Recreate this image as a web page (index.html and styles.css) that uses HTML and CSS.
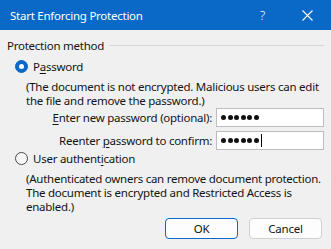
FILE: index.html
```html
<!DOCTYPE html>
<html>
<head>
<meta charset="utf-8">
<link rel="stylesheet" href="styles.css">
</head>
<body>
<div class="dialog">
  <div class="titlebar">
    <span class="title">Start Enforcing Protection</span>
    <span class="help">?</span>
    <svg class="close" width="11" height="11" viewBox="0 0 11 11"><path d="M0.5 0.5 L10.5 10.5 M10.5 0.5 L0.5 10.5" stroke="#fff" stroke-width="1.1" fill="none"/></svg>
  </div>
  <div class="body">
    <div class="group-header">
      <span class="group-label">Protection method</span>
      <span class="group-line"></span>
    </div>
    <div class="option option-first">
      <span class="radio radio-on"><span class="radio-dot"></span></span>
      <span class="option-label">P<u>a</u>ssword</span>
    </div>
    <div class="desc desc-first">(The document is not encrypted. Malicious users can edit<br>the file and remove the password.)</div>
    <div class="fields">
      <label class="field-label"><u>E</u>nter new password (optional):</label>
      <div class="box"><span class="dots"><i></i><i></i><i></i><i></i><i></i><i></i></span></div>
      <label class="field-label">Reenter <u>p</u>assword to confirm:</label>
      <div class="box"><span class="dots"><i></i><i></i><i></i><i></i><i></i><i></i></span><span class="caret"></span></div>
    </div>
    <div class="option option-second">
      <span class="radio"></span>
      <span class="option-label">User authent<u>i</u>cation</span>
    </div>
    <div class="desc desc-second">(Authenticated owners can remove document protection.<br>The document is encrypted and Restricted Access is<br>enabled.)</div>
    <div class="buttons">
      <button class="btn btn-default">OK</button>
      <button class="btn">Cancel</button>
    </div>
  </div>
</div>
</body>
</html>
```

FILE: styles.css
```css
html, body {
  margin: 0;
  padding: 0;
  background: #f0f0f0;
}
.dialog {
  width: 331px;
  height: 249px;
  background: #f0f0f0;
  font-family: "Noto Sans", "Liberation Sans", sans-serif;
  font-size: 11.5px;
  letter-spacing: -0.25px;
  color: #141414;
  overflow: hidden;
  display: flex;
  flex-direction: column;
}
.titlebar {
  height: 30px;
  background: #0a68c6;
  color: #fff;
  display: flex;
  align-items: center;
  padding-left: 10px;
  flex-shrink: 0;
}
.title {
  flex: 1;
  white-space: nowrap;
}
.help {
  font-size: 13px;
  margin-right: 37px;
  font-weight: 300;
}
.close {
  margin-right: 18px;
}
.body {
  padding: 8px 7px 0 7px;
  display: flex;
  flex-direction: column;
}
.group-header {
  display: flex;
  align-items: center;
  height: 15px;
  line-height: 15px;
}
.group-label {
  white-space: nowrap;
}
.group-line {
  flex: 1;
  height: 1px;
  background: #d6d6d6;
  margin-left: 5px;
  margin-top: -1px;
}
.option {
  display: flex;
  align-items: center;
  height: 15px;
  line-height: 15px;
  padding-left: 8px;
}
.option-first { margin-top: 6px; }
.option-second { margin-top: 1px; }
.radio {
  width: 11px;
  height: 11px;
  border: 1px solid #4a4a4a;
  border-radius: 50%;
  background: #f7f7f7;
  display: flex;
  align-items: center;
  justify-content: center;
  margin-right: 5px;
  flex-shrink: 0;
}
.radio-on {
  background: #0a68c6;
  border-color: #0a68c6;
}
.radio-dot {
  width: 5px;
  height: 5px;
  border-radius: 50%;
  background: #fff;
}
.desc {
  padding-left: 19px;
  line-height: 14px;
  white-space: nowrap;
}
.desc-first { margin-top: 6px; }
.desc-second { margin-top: 6px; }
.fields {
  display: grid;
  grid-template-columns: 1fr 108px;
  column-gap: 4px;
  row-gap: 4px;
  align-items: center;
}
.field-label {
  text-align: right;
  white-space: nowrap;
}
.box {
  height: 17px;
  background: #fff;
  border: 1px solid #bdbdbd;
  display: flex;
  align-items: center;
  padding-left: 4px;
}
.dots {
  display: flex;
  gap: 1.6px;
}
.dots i {
  width: 5px;
  height: 5px;
  border-radius: 50%;
  background: #111;
}
.caret {
  width: 1px;
  height: 13px;
  background: #000;
  margin-left: 2px;
}
.buttons {
  display: flex;
  justify-content: flex-end;
  gap: 11px;
  margin-top: 4px;
  padding-right: 2px;
}
.btn {
  width: 73px;
  height: 21px;
  font-family: inherit;
  font-size: 11.5px;
  letter-spacing: -0.25px;
  color: #141414;
  background: #fdfdfd;
  border: 1px solid #d0d0d0;
  border-radius: 4px;
  padding: 0;
}
.btn-default {
  border-color: #0a68c6;
}
u {
  text-decoration-thickness: 1px;
  text-underline-offset: 2px;
}
```
